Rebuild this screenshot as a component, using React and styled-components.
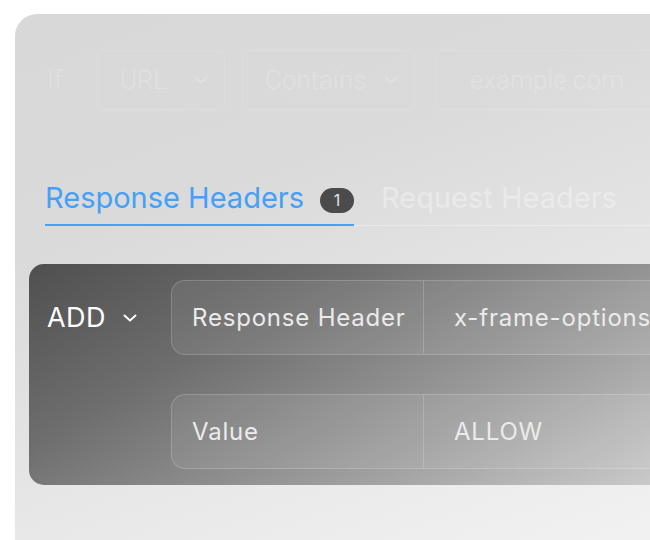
import React from "react";
import styled, { createGlobalStyle } from "styled-components";

const GlobalStyle = createGlobalStyle`
  html, body {
    margin: 0;
    padding: 0;
    background: #ffffff;
    overflow: hidden;
  }
  body {
    font-family: "Inter", "Liberation Sans", sans-serif;
  }
`;

const Page = styled.div`
  width: 650px;
  height: 540px;
  padding: 14px 0 0 15px;
  box-sizing: border-box;
  overflow: hidden;
`;

const Card = styled.div`
  width: 700px;
  height: 560px;
  box-sizing: border-box;
  padding-top: 36px;
  border-radius: 22px 0 0 0;
  background: linear-gradient(160deg, #d8d8d8 0%, #dadada 30%, #e8e8e8 65%, #f4f4f4 100%);
`;

const RuleRow = styled.div`
  display: flex;
  align-items: center;
  height: 60px;
  padding-left: 32px;
  font-family: "Roboto", "Liberation Sans", sans-serif;
  font-weight: 300;
  font-size: 26px;
  color: rgba(255, 255, 255, 0.22);
`;

const RuleWord = styled.span`
  width: 50px;
`;

const RuleBox = styled.div`
  display: flex;
  align-items: center;
  justify-content: space-between;
  box-sizing: border-box;
  width: ${(p) => p.$w}px;
  height: 60px;
  margin-right: ${(p) => p.$gap || 0}px;
  padding: 0 16px 0 ${(p) => p.$pl || 22}px;
  border: 1px solid rgba(255, 255, 255, 0.12);
  border-radius: 6px;
`;

const TabsBar = styled.div`
  display: flex;
  align-items: flex-end;
  margin-top: 70px;
  margin-left: 30px;
  border-bottom: 1px solid rgba(255, 255, 255, 0.3);
`;

const Tab = styled.div`
  display: flex;
  align-items: center;
  gap: 16px;
  margin-right: 27px;
  padding-bottom: 8px;
  margin-bottom: -1px;
  font-size: 29px;
  line-height: 36px;
  color: ${(p) => (p.$active ? "#45a0f6" : "rgba(255, 255, 255, 0.35)")};
  border-bottom: 2px solid ${(p) => (p.$active ? "#45a0f6" : "transparent")};
`;

const Badge = styled.span`
  display: inline-flex;
  align-items: center;
  justify-content: center;
  width: 34px;
  height: 25px;
  margin-top: 4px;
  border-radius: 13px;
  background: #4b4b4b;
  color: #e4e4e4;
  font-size: 16px;
  line-height: 1;
`;

const Panel = styled.div`
  display: flex;
  width: 700px;
  margin: 38px 0 0 14px;
  padding: 16px 0 16px 18px;
  box-sizing: border-box;
  border-radius: 15px 0 0 15px;
  background: linear-gradient(151deg, #4f4f4f 0%, #6e6e6e 30%, #a6a6a6 70%, #d4d4d4 100%);
`;

const ActionCol = styled.div`
  display: flex;
  align-items: center;
  gap: 17px;
  width: 124px;
  height: 75px;
  color: #ffffff;
  font-size: 27px;
  letter-spacing: 0.4px;
`;

const Fields = styled.div`
  display: flex;
  flex-direction: column;
  gap: 39px;
  flex: 1;
`;

const FieldGroup = styled.div`
  display: flex;
  height: 75px;
  box-sizing: border-box;
  border: 1.5px solid rgba(255, 255, 255, 0.18);
  border-right: none;
  border-radius: 14px 0 0 14px;
  background: rgba(255, 255, 255, 0.07);
  color: #ebebeb;
  font-size: 24px;
  letter-spacing: 0.8px;
`;

const FieldCell = styled.div`
  display: flex;
  align-items: center;
  box-sizing: border-box;
  width: ${(p) => (p.$w ? `${p.$w}px` : "auto")};
  flex: ${(p) => (p.$w ? "none" : 1)};
  padding-left: ${(p) => p.$pl}px;
  border-right: ${(p) => (p.$w ? "1.5px solid rgba(255,255,255,0.18)" : "none")};
  white-space: nowrap;
`;

const Chevron = ({ color = "currentColor" }) => (
  <svg width="14" height="8" viewBox="0 0 14 8" fill="none">
    <path d="M1.5 1.5 7 6.5l5.5-5" stroke={color} strokeWidth="1.9" strokeLinecap="round" strokeLinejoin="round" />
  </svg>
);

const rows = [
  { label: "Response Header", value: "x-frame-options" },
  { label: "Value", value: "ALLOW" },
];

export default function App() {
  return (
    <Page>
      <GlobalStyle />
      <Card>
        <RuleRow>
          <RuleWord>If</RuleWord>
          <RuleBox $w={128} $gap={17}>
            URL <Chevron />
          </RuleBox>
          <RuleBox $w={173} $gap={20}>
            Contains <Chevron />
          </RuleBox>
          <RuleBox $w={230} $pl={34}>
            example.com
          </RuleBox>
        </RuleRow>

        <TabsBar>
          <Tab $active>
            Response Headers <Badge>1</Badge>
          </Tab>
          <Tab>Request Headers</Tab>
        </TabsBar>

        <Panel>
          <ActionCol>
            ADD <Chevron />
          </ActionCol>
          <Fields>
            {rows.map((r) => (
              <FieldGroup key={r.label}>
                <FieldCell $w={252} $pl={20}>{r.label}</FieldCell>
                <FieldCell $pl={30}>{r.value}</FieldCell>
              </FieldGroup>
            ))}
          </Fields>
        </Panel>
      </Card>
    </Page>
  );
}
